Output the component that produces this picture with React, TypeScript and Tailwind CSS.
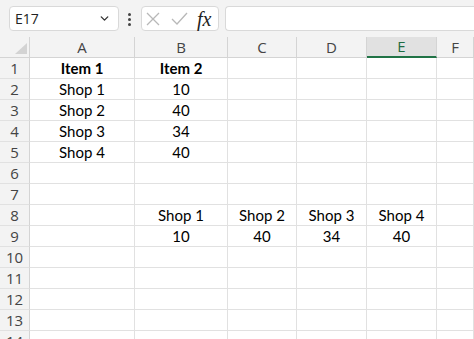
import { ChevronDown } from 'lucide-react';

const cols = ['A', 'B', 'C', 'D', 'E', 'F'];

// cell values by row number, one entry per column A..F
const data: Record<number, (string | null)[]> = {
  1: ['Item 1', 'Item 2'],
  2: ['Shop 1', '10'],
  3: ['Shop 2', '40'],
  4: ['Shop 3', '34'],
  5: ['Shop 4', '40'],
  8: [null, 'Shop 1', 'Shop 2', 'Shop 3', 'Shop 4'],
  9: [null, '10', '40', '34', '40'],
};

function Toolbar() {
  return (
    <div className="flex h-[37px] items-start bg-[#f3f3f3] pt-[6px]">
      <div className="ml-[9px] flex h-[25px] w-[110px] items-center justify-between rounded-[4px] border border-[#d9d9d9] bg-white pl-[5px] pr-[7px]">
        <span className="text-[14px] text-[#222]" style={{ fontFamily: '"Open Sans", sans-serif' }}>E17</span>
        <ChevronDown size={13} strokeWidth={2.5} className="text-[#333]" />
      </div>
      <div className="ml-[9px] mr-[10px] mt-[7px] flex flex-col gap-[2px]">
        <div className="h-[3px] w-[3px] rounded-full bg-[#444]" />
        <div className="h-[3px] w-[3px] rounded-full bg-[#444]" />
        <div className="h-[3px] w-[3px] rounded-full bg-[#444]" />
      </div>
      <div className="flex h-[25px] w-[78px] items-center rounded-[4px] border border-[#d9d9d9] bg-white pl-[4px]">
        {/* cancel */}
        <svg width="14" height="14" viewBox="0 0 14 14" className="shrink-0">
          <path d="M1 1 L13 13 M13 1 L1 13" stroke="#b8b8b8" strokeWidth="1.3" fill="none" />
        </svg>
        {/* enter */}
        <svg width="17" height="13" viewBox="0 0 17 13" className="ml-[11px] shrink-0">
          <path d="M1 7 L6 12 L16 1" stroke="#b8b8b8" strokeWidth="1.3" fill="none" />
        </svg>
        <span className="ml-[9px] text-[20px] italic leading-none text-[#222]" style={{ fontFamily: '"Liberation Serif", serif' }}>fx</span>
      </div>
      <div className="ml-[6px] h-[25px] flex-1 rounded-l-[4px] border border-r-0 border-[#d9d9d9] bg-white" />
    </div>
  );
}

function HeaderRow() {
  return (
    <>
      <div className="relative h-[21px] border-b border-r border-[#d4d4d4] bg-[#f3f3f3]">
        <svg className="absolute left-[15px] top-[6px]" width="12" height="11" viewBox="0 0 12 11">
          <polygon points="12,0 12,11 0,11" fill="#d3d3d3" />
        </svg>
      </div>
      {cols.map((c) =>
        c === 'E' ? (
          <div key={c} className="flex h-[21px] items-center justify-center border-b-2 border-r border-b-[#217346] border-r-[#d4d4d4] bg-[#e1e1e1] text-[15px] text-[#1e6b42]">
            {c}
          </div>
        ) : (
          <div key={c} className="flex h-[21px] items-center justify-center border-b border-r border-[#d4d4d4] bg-[#f3f3f3] text-[15px] text-[#444]">
            {c}
          </div>
        )
      )}
    </>
  );
}

export default function App() {
  const rows = Array.from({ length: 14 }, (_, i) => i + 1);
  return (
    <div className="h-[339px] w-[474px] overflow-hidden bg-white" style={{ fontFamily: '"Open Sans", sans-serif' }}>
      <Toolbar />
      <div className="grid grid-cols-[30px_105px_93px_69px_70px_70px_1fr]">
        <HeaderRow />
        {rows.map((r) => (
          <Row key={r} n={r} />
        ))}
      </div>
    </div>
  );
}

function Row({ n }: { n: number }) {
  const vals = data[n] ?? [];
  return (
    <>
      <div className="flex h-[21px] items-center justify-center border-b border-r border-b-[#e1e1e1] border-r-[#d4d4d4] bg-[#f3f3f3] text-[15px] text-[#444]">
        {n}
      </div>
      {cols.map((c, i) => (
        <div
          key={c}
          className={`flex h-[21px] items-center justify-center border-b border-r border-[#e1e1e1] text-[15px] text-black ${n === 1 ? 'font-bold' : ''}`}
          style={{ fontFamily: 'Lato, sans-serif' }}
        >
          {vals[i] ?? ''}
        </div>
      ))}
    </>
  );
}
